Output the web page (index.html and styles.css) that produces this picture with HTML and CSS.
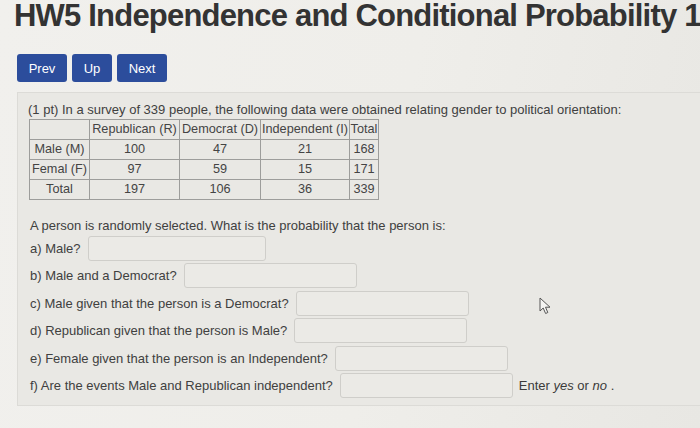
FILE: index.html
```html
<!DOCTYPE html>
<html>
<head>
<meta charset="utf-8">
<link rel="stylesheet" href="styles.css">
</head>
<body>
<h1 class="title">HW5 Independence and Conditional Probability 1</h1>
<div class="nav">
  <span class="btn btn-prev">Prev</span>
  <span class="btn btn-up">Up</span>
  <span class="btn btn-next">Next</span>
</div>
<div class="panel">
  <p class="intro">(1 pt) In a survey of 339 people, the following data were obtained relating gender to political orientation:</p>
  <table class="data">
    <tr><td class="blank"></td><td>Republican (R)</td><td>Democrat (D)</td><td>Independent (I)</td><td>Total</td></tr>
    <tr><td>Male (M)</td><td>100</td><td>47</td><td>21</td><td>168</td></tr>
    <tr><td>Femal (F)</td><td>97</td><td>59</td><td>15</td><td>171</td></tr>
    <tr><td>Total</td><td>197</td><td>106</td><td>36</td><td>339</td></tr>
  </table>
  <p class="lead">A person is randomly selected. What is the probability that the person is:</p>
  <div class="questions">
    <div class="q"><span>a) Male?</span><span class="field field-a"></span></div>
    <div class="q"><span>b) Male and a Democrat?</span><span class="field"></span></div>
    <div class="q"><span>c) Male given that the person is a Democrat?</span><span class="field"></span></div>
    <div class="q"><span>d) Republican given that the person is Male?</span><span class="field"></span></div>
    <div class="q"><span>e) Female given that the person is an Independent?</span><span class="field"></span></div>
    <div class="q"><span>f) Are the events Male and Republican independent?</span><span class="field"></span><span class="hint">Enter <i>yes</i> or <i>no</i> .</span></div>
  </div>
</div>
<svg class="cursor" width="14" height="18" viewBox="0 0 14 18">
  <path d="M1 1 L1 14 L4.2 11 L6.6 16.5 L8.8 15.5 L6.5 10.2 L11 10.2 Z" fill="#f4f4f2" stroke="#555" stroke-width="1" stroke-linejoin="round"/>
</svg>
</body>
</html>
```

FILE: styles.css
```css
html, body {
  margin: 0;
  padding: 0;
}
body {
  width: 700px;
  height: 428px;
  overflow: hidden;
  position: relative;
  background: linear-gradient(100deg, #f1f0ed 0%, #efeeea 55%, #e8e7e3 100%);
  font-family: "Liberation Sans", Arial, sans-serif;
  color: #3a3a3a;
}
.title {
  margin: 0;
  padding: 0 0 0 14px;
  font-size: 31px;
  line-height: 32px;
  height: 38px;
  font-weight: bold;
  color: #333;
  white-space: nowrap;
  overflow: hidden;
  letter-spacing: -0.8px;
}
.nav {
  display: flex;
  gap: 5px;
  margin: 16px 0 0 17px;
}
.btn {
  display: flex;
  align-items: center;
  justify-content: center;
  height: 28px;
  background: #2c4d9c;
  color: #fff;
  font-size: 13px;
  border-radius: 3px;
}
.btn-prev { width: 50px; }
.btn-up { width: 40px; }
.btn-next { width: 50px; }
.panel {
  margin: 10px 0 0 17px;
  padding: 8px 0 7px 10px;
  background: #e9e8e4;
  border: 1px solid #dcdbd7;
  border-right: none;
  font-size: 13px;
  color: #404040;
}
.intro {
  margin: 0;
  line-height: 18px;
}
.data {
  border-collapse: collapse;
  margin: 0 0 0 1px;
  font-size: 12.7px;
  color: #444;
}
.data td {
  border: 1px solid #9d9d9b;
  padding: 1px 0;
  line-height: 17px;
  text-align: center;
  white-space: nowrap;
}
.data td:nth-child(1) { width: 59px; }
.data td:nth-child(2) { width: 89px; }
.data td:nth-child(3) { width: 80px; }
.data td:nth-child(4) { width: 88px; }
.data td:nth-child(5) { width: 28px; }
.lead {
  margin: 17px 0 0 2px;
  line-height: 18px;
}
.questions {
  display: flex;
  flex-direction: column;
  gap: 2.4px;
  margin: 1px 0 0 2px;
}
.q {
  display: flex;
  align-items: center;
  gap: 7px;
  height: 25px;
  white-space: nowrap;
}
.field {
  display: block;
  width: 171px;
  height: 23px;
  border: 1px solid #cfceca;
  border-radius: 3px;
  background: #ebeae6;
}
.field-a { width: 176px; }
.hint {
  margin-left: -1px;
  color: #3a3a3a;
}
.cursor {
  position: absolute;
  left: 539px;
  top: 297px;
}
```
